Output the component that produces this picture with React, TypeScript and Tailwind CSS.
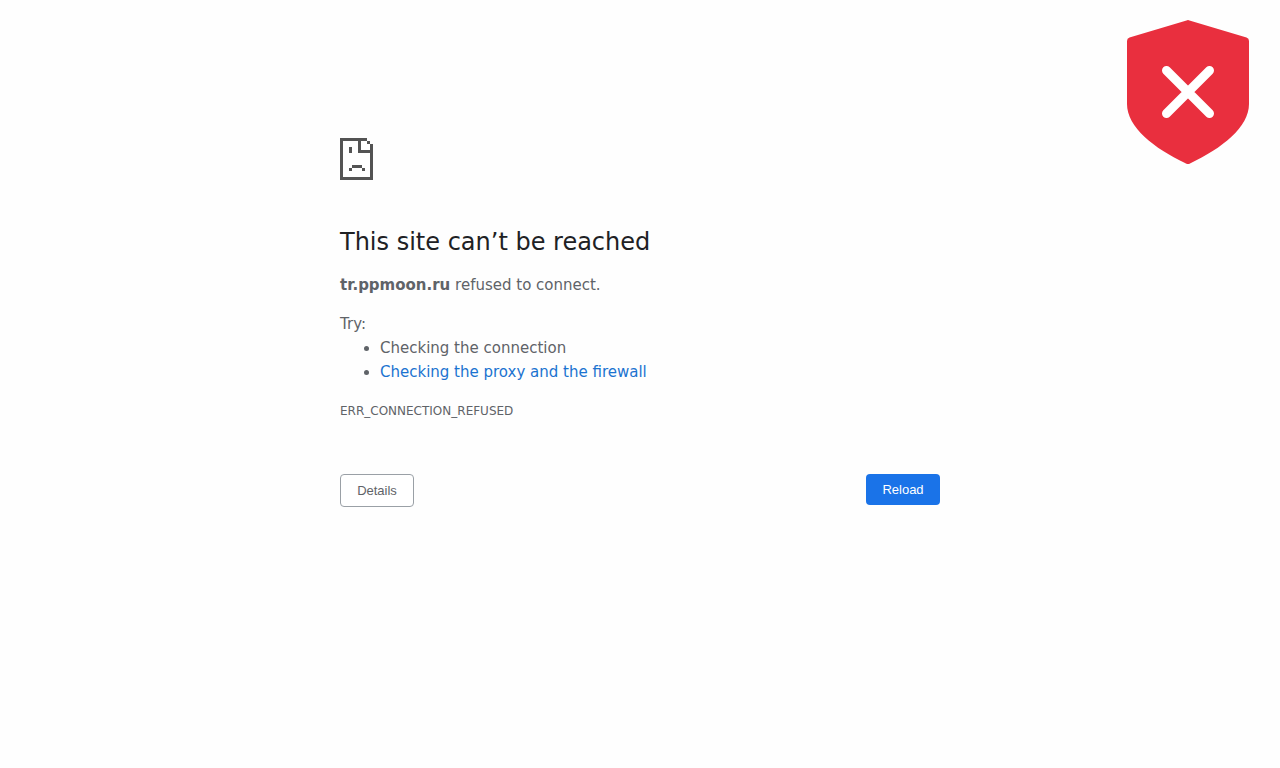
function SadPageIcon() {
  return (
    <svg className="block h-[42px] w-[33px]" viewBox="0 0 33 42" fill="#535353" shapeRendering="crispEdges" aria-hidden="true">
      <path d="M0 0H27V3H21V12H30V6H33V42H0ZM3 3V39H30V15H18V3Z" fillRule="evenodd" />
      <path d="M27 3h3v3h-3zM9 9h3v6H9zM12 27h10v3H12zM9 30h3v3H9zM22 30h3v3h-3z" />
    </svg>
  );
}

function BlockedShield() {
  return (
    <svg className="absolute top-5 right-[31px] h-36 w-[122px]" viewBox="0 0 122 144" role="img" aria-label="Blocked">
      <path
        d="M59.5 .4Q61 -.2 62.5 .4L119.5 17.5Q122 18.3 122 21V84C122 107 95 128.5 63 143.4Q61 144.4 59 143.4C27 128.5 0 107 0 84V21Q0 18.3 2.5 17.5Z"
        fill="#e92f3e"
      />
      <path d="M39.5 50.5L82.5 93.5M82.5 50.5L39.5 93.5" stroke="#fff" strokeWidth="9" strokeLinecap="round" />
    </svg>
  );
}

export default function App() {
  return (
    <div className="relative min-h-screen bg-[#fefefe] px-5 pt-[138px] pb-10 font-['DejaVu_Sans',sans-serif] text-[15px] leading-6 text-[#5f6368]">
      <BlockedShield />
      <main className="mx-auto max-w-[600px]">
        <SadPageIcon />
        <h1 className="mt-11 text-2xl leading-9 text-[#202124]">This site can’t be reached</h1>
        <p className="mt-[13px]">
          <strong className="font-bold">tr.ppmoon.ru</strong> refused to connect.
        </p>
        <div className="mt-[15px]">
          <p>Try:</p>
          <ul className="list-disc pl-10">
            <li>Checking the connection</li>
            <li>
              <a href="#buttons" className="text-[#1b73d0]">Checking the proxy and the firewall</a>
            </li>
          </ul>
        </div>
        <p className="mt-[15px] text-xs leading-6">ERR_CONNECTION_REFUSED</p>
        <div id="buttons" className="mt-[51px] flex items-start justify-between font-['Liberation_Sans',Arial,sans-serif] text-[13px] leading-[15px]">
          <button type="button" className="min-w-[74px] rounded border border-[#9aa0a6] bg-white px-4 py-2 text-[#5f6368]">
            Details
          </button>
          <button type="button" className="min-w-[74px] rounded bg-[#1a73e8] px-4 py-2 text-white">
            Reload
          </button>
        </div>
      </main>
    </div>
  );
}
